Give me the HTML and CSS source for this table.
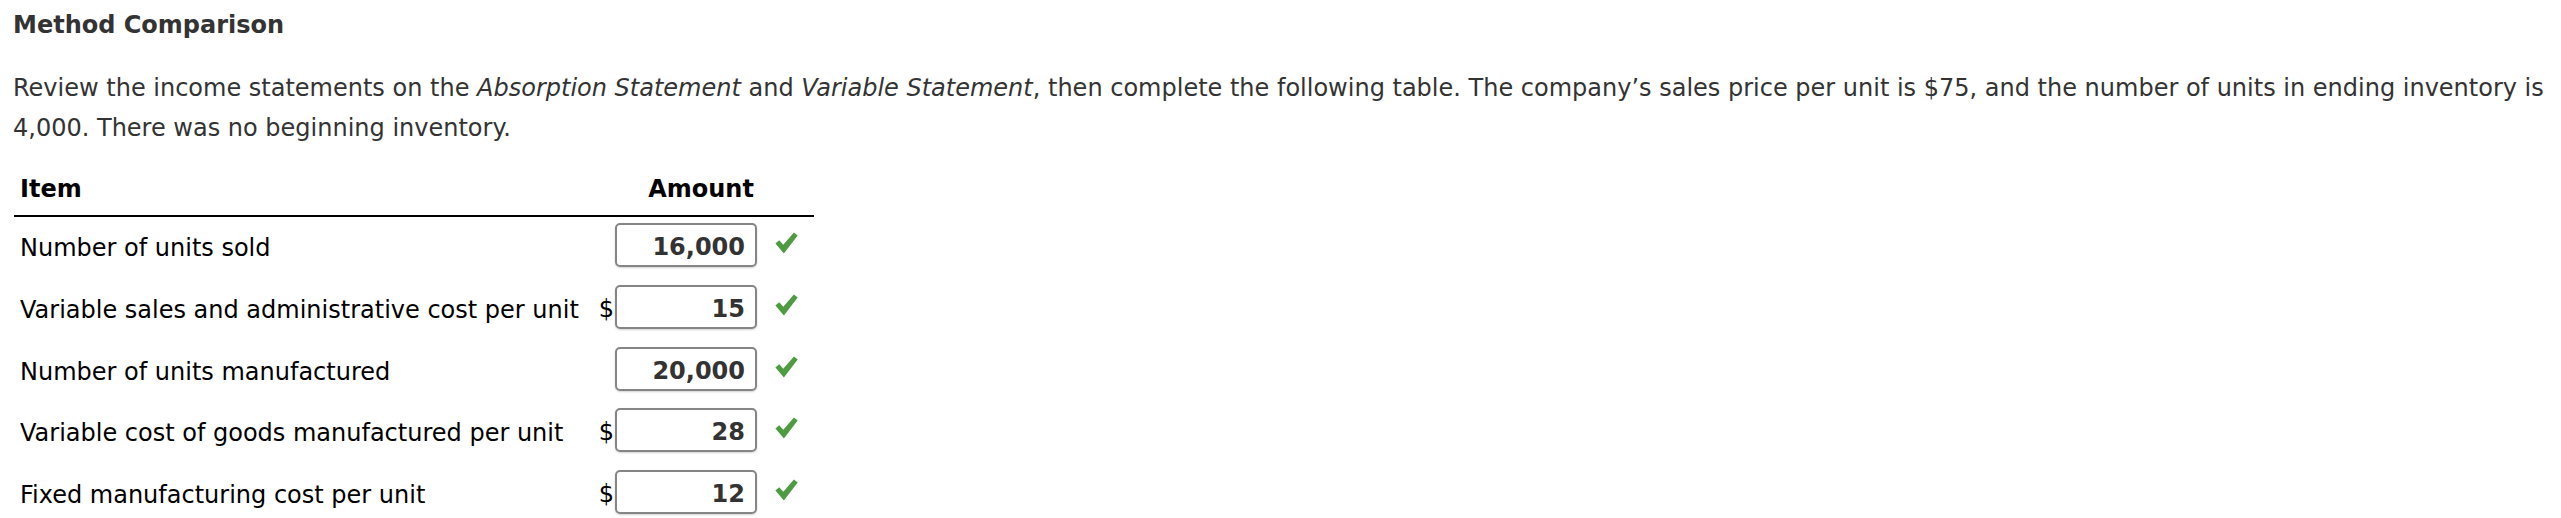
FILE: index.html
```html
<!DOCTYPE html>
<html>
<head>
<meta charset="utf-8">
<title>Method Comparison</title>
<link rel="stylesheet" href="styles.css">
</head>
<body>
<div class="page">
  <div class="title">Method Comparison</div>
  <p class="intro">Review the income statements on the <em>Absorption Statement</em> and <em>Variable Statement</em>, then complete the following table. The company’s sales price per unit is $75, and the number of units in ending inventory is 4,000. There was no beginning inventory.</p>
  <div class="table">
    <div class="row head">
      <div class="c-item">Item</div>
      <div class="c-amt">Amount</div>
    </div>
    <div class="row">
      <div class="label">Number of units sold</div>
      <div class="amt"><span class="cur"></span><span class="box">16,000</span><svg class="chk" viewBox="0 0 23 22"><path d="M0.4 11.6 L4.2 8.3 L8.3 12.8 L18.9 0.4 L22.7 3.6 L8.9 21.6 Z"/></svg></div>
    </div>
    <div class="row">
      <div class="label">Variable sales and administrative cost per unit</div>
      <div class="amt"><span class="cur">$</span><span class="box">15</span><svg class="chk" viewBox="0 0 23 22"><path d="M0.4 11.6 L4.2 8.3 L8.3 12.8 L18.9 0.4 L22.7 3.6 L8.9 21.6 Z"/></svg></div>
    </div>
    <div class="row">
      <div class="label">Number of units manufactured</div>
      <div class="amt"><span class="cur"></span><span class="box">20,000</span><svg class="chk" viewBox="0 0 23 22"><path d="M0.4 11.6 L4.2 8.3 L8.3 12.8 L18.9 0.4 L22.7 3.6 L8.9 21.6 Z"/></svg></div>
    </div>
    <div class="row">
      <div class="label">Variable cost of goods manufactured per unit</div>
      <div class="amt"><span class="cur">$</span><span class="box">28</span><svg class="chk" viewBox="0 0 23 22"><path d="M0.4 11.6 L4.2 8.3 L8.3 12.8 L18.9 0.4 L22.7 3.6 L8.9 21.6 Z"/></svg></div>
    </div>
    <div class="row">
      <div class="label">Fixed manufacturing cost per unit</div>
      <div class="amt"><span class="cur">$</span><span class="box">12</span><svg class="chk" viewBox="0 0 23 22"><path d="M0.4 11.6 L4.2 8.3 L8.3 12.8 L18.9 0.4 L22.7 3.6 L8.9 21.6 Z"/></svg></div>
    </div>
  </div>
</div>
</body>
</html>
```
FILE: styles.css
```css
html, body {
  margin: 0;
  background: #fff;
}
body {
  font-family: "DejaVu Sans", Verdana, sans-serif;
  font-size: 24px;
  color: #333;
}
.page {
  padding: 11px 8px 0 13px;
}
.title {
  font-weight: bold;
  line-height: 28px;
  color: #333;
}
.intro {
  margin: 29px 0 0 0;
  line-height: 40px;
  color: #333;
}
.table {
  width: 800px;
  margin: 27px 0 0 1px;
  color: #000;
}
.row {
  display: grid;
  grid-template-columns: 574px 226px;
  height: 61.75px;
  align-items: start;
}
.row.head {
  height: auto;
  border-bottom: 2px solid #000;
  font-weight: bold;
  line-height: 28px;
  padding-bottom: 12px;
}
.c-item {
  padding-left: 6px;
}
.c-amt {
  text-align: center;
}
.label {
  padding: 17px 0 0 6px;
  line-height: 28px;
  white-space: nowrap;
}
.amt {
  display: flex;
  align-items: flex-start;
  padding-top: 6px;
}
.cur {
  width: 26px;
  text-align: right;
  line-height: 28px;
  padding-top: 10px;
  flex: none;
}
.box {
  box-sizing: border-box;
  width: 142px;
  height: 44px;
  margin-left: 1px;
  border: 2px solid #858585;
  border-radius: 5px;
  box-shadow: 0 1px 2px rgba(0,0,0,0.18);
  padding: 4px 10px 0 0;
  line-height: 36px;
  text-align: right;
  font-weight: bold;
  color: #333;
  flex: none;
}
.chk {
  width: 23px;
  height: 22px;
  margin: 9px 0 0 18px;
  fill: #4e9b41;
  flex: none;
}
```
